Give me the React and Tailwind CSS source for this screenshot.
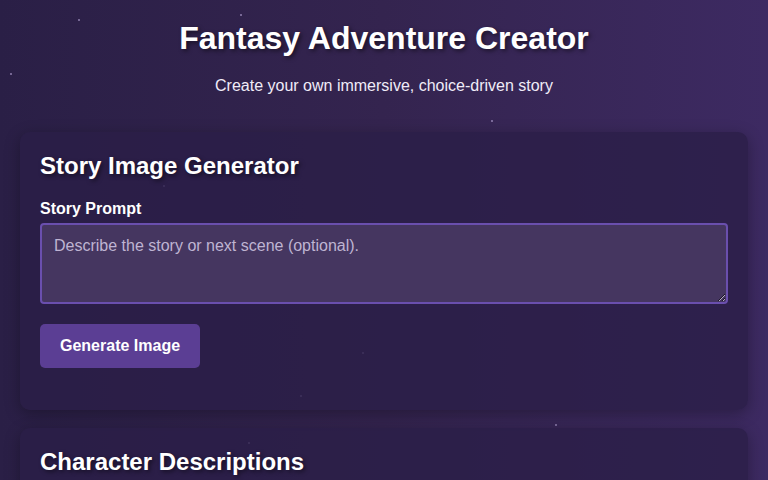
const stars = [
  [240, 14], [78, 19], [10, 73], [491, 120], [163, 185], [411, 243], [690, 253], [713, 253], [242, 297],
  [362, 352], [300, 395], [555, 424], [248, 442],
];

export default function App() {
  return (
    <div
      className="relative min-h-[480px] overflow-hidden bg-gradient-to-r from-[#2a1f46] via-[#34244f] to-[#3d2a62] px-5 pb-10 text-white"
      style={{ fontFamily: '"Liberation Sans", Arial, sans-serif' }}
    >
      {stars.map(([x, y], i) => (
        <span
          key={i}
          className="absolute h-[2px] w-[2px] rounded-full bg-[#b9a8d8]/70"
          style={{ left: x, top: y }}
        />
      ))}

      <header className="pt-[19px] text-center">
        <h1 className="text-[32px] leading-[38px] font-bold [text-shadow:2px_2px_4px_rgba(0,0,0,0.5)]">
          Fantasy Adventure Creator
        </h1>
        <p className="mt-[19px] text-base leading-[20px] text-[#f0ecf8]">
          Create your own immersive, choice-driven story
        </p>
      </header>

      <section className="relative mt-[36px] rounded-[10px] bg-[#2b1e47]/80 p-5 pb-[42px] shadow-[0_4px_16px_rgba(0,0,0,0.3)]">
        <h2 className="text-2xl leading-[28px] font-bold [text-shadow:2px_2px_4px_rgba(0,0,0,0.5)]">
          Story Image Generator
        </h2>
        <label className="mt-[19px] block text-base leading-[20px] font-bold">Story Prompt</label>
        <textarea
          className="mt-[4px] block h-[81px] w-full resize-y rounded-[4px] border-2 border-[#6a4fae] bg-[#453660] px-3 py-[9px] text-base text-white placeholder:text-[#bfb4d2] outline-none"
          placeholder="Describe the story or next scene (optional)."
        />
        <button className="mt-5 h-[44px] rounded-[5px] bg-[#5b3e94] px-5 text-base font-bold text-white">
          Generate Image
        </button>
      </section>

      <section className="relative mt-[18px] rounded-[10px] bg-[#2b1e47]/80 p-5 shadow-[0_4px_16px_rgba(0,0,0,0.3)]">
        <h2 className="text-2xl leading-[28px] font-bold [text-shadow:2px_2px_4px_rgba(0,0,0,0.5)]">
          Character Descriptions
        </h2>
        <div className="h-20" />
      </section>
    </div>
  );
}
